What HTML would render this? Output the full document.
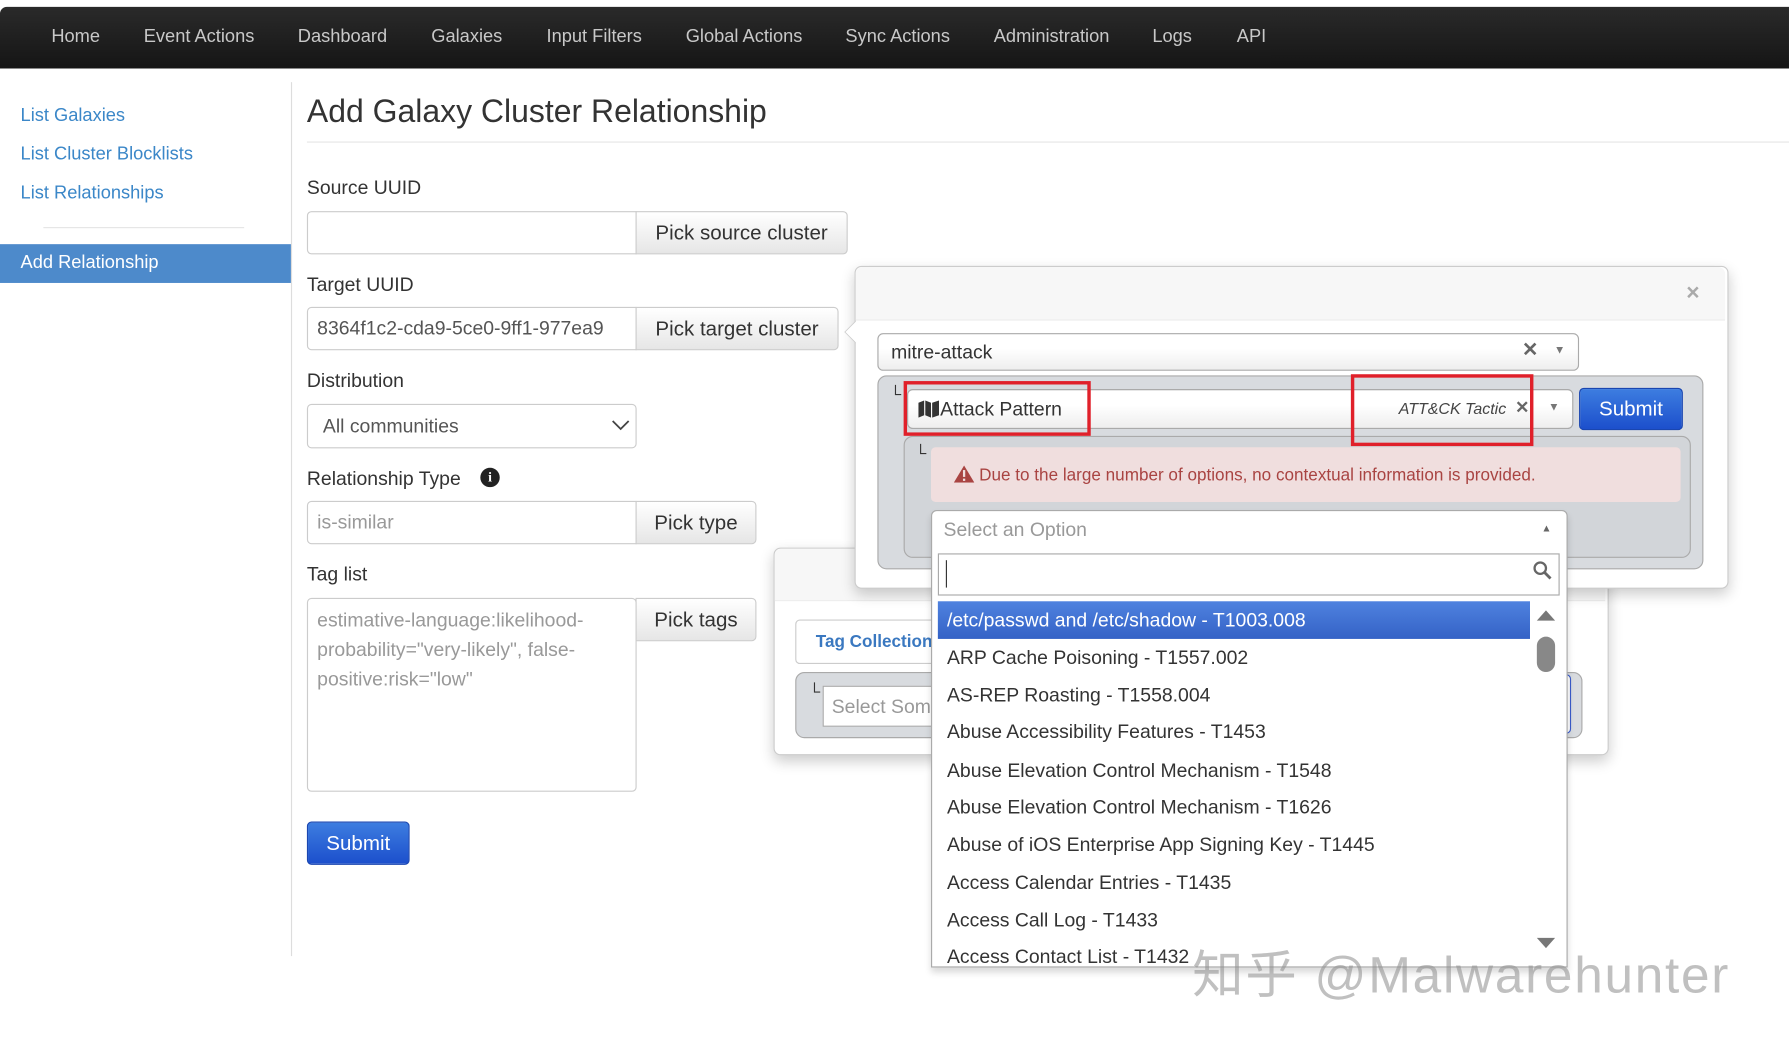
<!DOCTYPE html>
<html><head><meta charset="utf-8">
<style>
html,body{margin:0;padding:0;background:#fff;overflow:hidden;width:1789px;height:1037px}
#w{position:absolute;left:0;top:0;width:1568px;height:909px;transform:scale(1.14094);transform-origin:0 0;font-family:"Liberation Sans",Arial,sans-serif;color:#333}
.a{position:absolute}
.nav{left:0;top:6px;width:1568px;height:54px;background:linear-gradient(#2a2a2a,#151515);border-radius:6px 0 0 0}
.nav span{position:absolute;top:18px;font-size:16px;color:#c8c8c8}
.side{font-size:16px;color:#3b87c8}
.lbl{font-size:17px;color:#333}
.inp{background:#fff;border:1px solid #ccc;border-radius:4px 0 0 4px;box-sizing:border-box;font-size:17px;color:#555;padding:8px}
.btn{background:linear-gradient(#fff,#e6e6e6);border:1px solid #ccc;border-radius:0 4px 4px 0;box-sizing:border-box;font-size:18px;color:#333;text-align:center;line-height:36px}
.sub{background:linear-gradient(#3d7de0,#1c4fcc);color:#fff;border-radius:4px;text-align:center;font-size:18px;box-sizing:border-box;border:1px solid #1a46b0}
.pop{background:#fff;border:1px solid #ccc;border-radius:6px;box-shadow:0 5px 12px rgba(0,0,0,.2)}
.red{border:3px solid #e0202a;box-sizing:border-box}
.opt{position:absolute;left:830px;font-size:17px;color:#333}
</style></head><body><div id="w">
<div class="a nav">
<span style="left:45px">Home</span><span style="left:126px">Event Actions</span><span style="left:261px">Dashboard</span><span style="left:378px">Galaxies</span><span style="left:479px">Input Filters</span><span style="left:601px">Global Actions</span><span style="left:741px">Sync Actions</span><span style="left:871px">Administration</span><span style="left:1010px">Logs</span><span style="left:1084px">API</span>
</div>
<div class="a side" style="left:18px;top:93px">List Galaxies</div>
<div class="a side" style="left:18px;top:127px">List Cluster Blocklists</div>
<div class="a side" style="left:18px;top:161px">List Relationships</div>
<div class="a" style="left:38px;top:199px;width:176px;height:1px;background:#e5e5e5"></div>
<div class="a" style="left:0;top:214px;width:255px;height:34px;background:#4d8acb;color:#fff;font-size:16px;line-height:34px;box-sizing:border-box;padding-left:18px">Add Relationship</div>
<div class="a" style="left:255px;top:72px;width:1px;height:766px;background:#ddd"></div>

<div class="a" style="left:269px;top:82px;font-size:28px;color:#333">Add Galaxy Cluster Relationship</div>
<div class="a" style="left:269px;top:124px;width:1299px;height:1px;background:#e5e5e5"></div>

<div class="a lbl" style="left:269px;top:155px">Source UUID</div>
<div class="a inp" style="left:269px;top:185px;width:289px;height:38px"></div>
<div class="a btn" style="left:557px;top:185px;width:186px;height:38px">Pick source cluster</div>

<div class="a lbl" style="left:269px;top:240px">Target UUID</div>
<div class="a inp" style="left:269px;top:269px;width:289px;height:38px">8364f1c2-cda9-5ce0-9ff1-977ea9</div>
<div class="a btn" style="left:557px;top:269px;width:178px;height:38px">Pick target cluster</div>

<div class="a lbl" style="left:269px;top:324px">Distribution</div>
<div class="a inp" style="left:269px;top:354px;width:289px;height:39px;border-radius:4px;padding:9px 13px">All communities</div>
<svg class="a" style="left:536px;top:367px" width="16" height="12"><path d="M1 2 L8 9 L15 2" fill="none" stroke="#444" stroke-width="1.6"/></svg>

<div class="a lbl" style="left:269px;top:410px">Relationship Type</div>
<div class="a" style="left:421px;top:410px;width:17px;height:17px;border-radius:50%;background:#222;color:#fff;font:bold 12px 'Liberation Serif',serif;text-align:center;line-height:17px">i</div>
<div class="a inp" style="left:269px;top:439px;width:289px;height:38px;color:#999">is-similar</div>
<div class="a btn" style="left:557px;top:439px;width:106px;height:38px">Pick type</div>

<div class="a lbl" style="left:269px;top:494px">Tag list</div>
<div class="a inp" style="left:269px;top:524px;width:289px;height:170px;border-radius:4px;color:#999;line-height:26px;padding:6px 8px;font-size:17px">estimative-language:likelihood-probability="very-likely", false-positive:risk="low"</div>
<div class="a btn" style="left:557px;top:524px;width:106px;height:38px">Pick tags</div>
<div class="a sub" style="left:269px;top:720px;width:90px;height:38px;line-height:36px">Submit</div>

<div class="a pop" style="left:678px;top:480px;width:730px;height:180px"></div>
<div class="a" style="left:679px;top:481px;width:728px;height:45px;background:#f7f7f7;border-bottom:1px solid #ebebeb;border-radius:6px 6px 0 0"></div>
<div class="a" style="left:697px;top:543px;width:140px;height:39px;border:1px solid #ccc;border-radius:4px;box-sizing:border-box;font:bold 15px 'Liberation Sans',sans-serif;color:#3a78c0;padding:10px 0 0 17px;white-space:nowrap;overflow:hidden">Tag Collection</div>
<div class="a" style="left:697px;top:589px;width:690px;height:58px;background:#d8dbdf;border:1px solid #aaa;border-radius:8px;box-sizing:border-box"></div>
<div class="a" style="left:709px;top:598px;font-size:14px;color:#333">└</div>
<div class="a" style="left:721px;top:601px;width:110px;height:36px;background:#fff;border:1px solid #aaa;box-sizing:border-box;font-size:17px;color:#999;padding:8px 7px;white-space:nowrap;overflow:hidden">Select Some</div>
<div class="a" style="left:1340px;top:591px;width:35px;height:50px;border:1px solid #3a5ccc;border-radius:4px;background:#fff"></div>

<div class="a pop" style="left:749px;top:233px;width:764px;height:281px"></div>
<div class="a" style="left:750px;top:234px;width:762px;height:46px;background:#f7f7f7;border-bottom:1px solid #ebebeb;border-radius:6px 6px 0 0"></div>
<div class="a" style="left:1478px;top:246px;font-size:20px;color:#aaa;font-weight:bold">×</div>
<div class="a" style="left:740px;top:281px;width:0;height:0;border-top:10px solid transparent;border-bottom:10px solid transparent;border-right:10px solid #ccc"></div>
<div class="a" style="left:741px;top:281px;width:0;height:0;border-top:10px solid transparent;border-bottom:10px solid transparent;border-right:10px solid #fff"></div>
<div class="a" style="left:769px;top:292px;width:615px;height:33px;border:1px solid #aaa;border-radius:5px;box-sizing:border-box;background:linear-gradient(#fff 40%,#eee);font-size:17px;padding:6px 11px">mitre-attack</div>
<div class="a" style="left:1334px;top:297px;font-size:17px;color:#666;font-weight:bold">✕</div>
<div class="a" style="left:1362px;top:302px;font-size:10px;color:#777">▼</div>

<div class="a" style="left:769px;top:329px;width:724px;height:170px;background:#d8dbdf;border:1px solid #aaa;border-radius:8px;box-sizing:border-box"></div>
<div class="a" style="left:780px;top:337px;font-size:14px">└</div>
<div class="a" style="left:795px;top:341px;width:584px;height:35px;border:1px solid #aaa;border-radius:5px;box-sizing:border-box;background:linear-gradient(#fff 40%,#eee);font-size:17px;padding:7px 8px">
<svg width="20" height="16" style="vertical-align:-2px"><path d="M1 3 L6 1 L6 14 L1 16Z M7 1 L12 3 L12 16 L7 14Z M13 3 L19 1 L19 14 L13 16Z" fill="#333"/></svg>Attack Pattern</div>
<div class="a" style="left:1226px;top:350px;font-size:14px;font-style:italic;color:#444">ATT&amp;CK Tactic</div>
<div class="a" style="left:1328px;top:348px;font-size:15px;color:#666;font-weight:bold">✕</div>
<div class="a" style="left:1357px;top:352px;font-size:10px;color:#777">▼</div>
<div class="a sub" style="left:1384px;top:340px;width:91px;height:37px;line-height:35px">Submit</div>

<div class="a" style="left:792px;top:382px;width:690px;height:107px;background:#d2d5d9;border:1px solid #aaa;border-radius:8px;box-sizing:border-box"></div>
<div class="a" style="left:802px;top:389px;font-size:14px">└</div>
<div class="a" style="left:816px;top:392px;width:657px;height:48px;background:#f0dede;border-radius:4px;color:#a94442;font-size:15px;padding:16px 0 0 20px;box-sizing:border-box">
<svg width="18" height="15" style="vertical-align:-2px"><path d="M9 0 L18 15 L0 15Z" fill="#a94442"/><rect x="8" y="4" width="2" height="6" fill="#f0dede"/><rect x="8" y="11.5" width="2" height="2" fill="#f0dede"/></svg> Due to the large number of options, no contextual information is provided.</div>
<div class="a red" style="left:792px;top:334px;width:164px;height:48px"></div>
<div class="a red" style="left:1184px;top:328px;width:160px;height:63px"></div>

<div class="a" style="left:816px;top:447px;width:558px;height:401px;background:#fff;border:1px solid #aaa;border-radius:5px 5px 0 0;box-sizing:border-box;box-shadow:0 4px 6px rgba(0,0,0,.15)"></div>
<div class="a" style="left:827px;top:455px;font-size:17px;color:#999">Select an Option</div>
<div class="a" style="left:1351px;top:458px;font-size:9px;color:#666">▲</div>
<div class="a" style="left:822px;top:485px;width:545px;height:37px;border:1px solid #aaa;box-sizing:border-box;background:#fff"></div>
<div class="a" style="left:829px;top:491px;width:1px;height:24px;background:#333"></div>
<svg class="a" style="left:1343px;top:491px" width="18" height="18"><circle cx="7" cy="7" r="5" fill="none" stroke="#666" stroke-width="2"/><path d="M11 11 L16 16" stroke="#666" stroke-width="2.5"/></svg>
<div class="a" style="left:822px;top:527px;width:519px;height:33px;background:linear-gradient(#4f82df,#3462c6)"></div>
<div class="opt" style="top:534px;color:#fff">/etc/passwd and /etc/shadow - T1003.008</div>
<div class="opt" style="top:567px">ARP Cache Poisoning - T1557.002</div>
<div class="opt" style="top:600px">AS-REP Roasting - T1558.004</div>
<div class="opt" style="top:632px">Abuse Accessibility Features - T1453</div>
<div class="opt" style="top:666px">Abuse Elevation Control Mechanism - T1548</div>
<div class="opt" style="top:698px">Abuse Elevation Control Mechanism - T1626</div>
<div class="opt" style="top:731px">Abuse of iOS Enterprise App Signing Key - T1445</div>
<div class="opt" style="top:764px">Access Calendar Entries - T1435</div>
<div class="opt" style="top:797px">Access Call Log - T1433</div>
<div class="a" style="left:820px;top:826px;width:520px;height:20px;overflow:hidden"><div style="position:absolute;left:10px;top:3px;font-size:17px">Access Contact List - T1432</div></div>
<div class="a" style="left:1347px;top:535px;width:0;height:0;border-left:8px solid transparent;border-right:8px solid transparent;border-bottom:9px solid #777"></div>
<div class="a" style="left:1347px;top:558px;width:16px;height:31px;background:#888;border-radius:8px"></div>
<div class="a" style="left:1347px;top:822px;width:0;height:0;border-left:8px solid transparent;border-right:8px solid transparent;border-top:9px solid #777"></div>

<div class="a" style="left:1045px;top:818px;font-size:45px;color:rgba(140,140,140,.55);font-family:'Liberation Sans','Noto Sans CJK SC',sans-serif;white-space:nowrap;letter-spacing:1.5px">知乎 @Malwarehunter</div>
</div></body></html>
